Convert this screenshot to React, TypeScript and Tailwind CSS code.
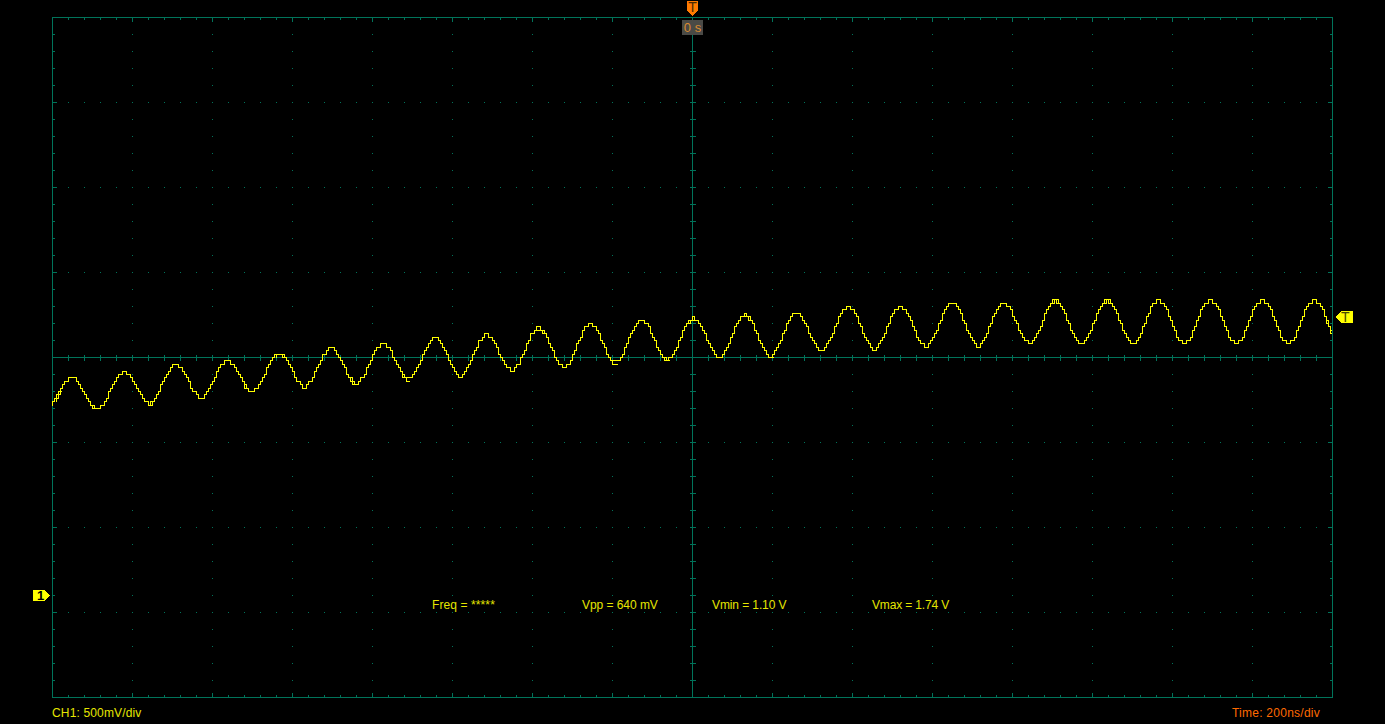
const LEFT = 52;
const TOP = 17;
const W = 1280;
const H = 680;
const GRID = '#00735a';

// peaks and troughs of the trace, read off the screen (page coordinates)
const extremes: [number, number][] = [
  [46, 409], [73, 377], [98, 408], [125, 371], [150, 403], [176, 364], [202, 397], [228, 360],
  [253, 391], [280, 352], [305, 386], [332, 347], [357, 383], [384, 343], [409, 379], [436, 337],
  [461, 376], [487, 334], [513, 370], [539, 327], [565, 367], [591, 323], [616, 362], [642, 319],
  [668, 359], [694, 317], [720, 357], [746, 314], [771, 356], [797, 312], [822, 350], [849, 306],
  [875, 349], [901, 306], [927, 346], [953, 302], [979, 346], [1004, 302], [1031, 343], [1056, 299],
  [1082, 343], [1108, 299], [1134, 343], [1159, 299], [1185, 343], [1211, 299], [1237, 343],
  [1263, 299], [1289, 343], [1315, 299], [1341, 343],
];

// stretches where overlapping acquisitions make the trace look heavier
const heavy: [number, number][] = [
  [56, 62], [88, 94], [148, 154], [198, 204], [244, 250], [276, 286], [350, 356], [402, 410],
  [456, 462], [534, 544], [612, 618], [664, 670], [688, 694], [744, 750], [768, 774], [1052, 1060],
  [1104, 1110], [1326, 1332],
];

function traceY(x: number) {
  let i = 0;
  while (i < extremes.length - 2 && extremes[i + 1][0] <= x) i++;
  const [x0, y0] = extremes[i];
  const [x1, y1] = extremes[i + 1];
  const t = (x - x0) / (x1 - x0);
  const c = Math.min(1, Math.max(0, (t - 0.04) / 0.92));
  const s = c - 0.07 * Math.sin(2 * Math.PI * c);
  return y0 + (y1 - y0) * s;
}

function stepPath(from: number, to: number, shift: number) {
  let d = '';
  let last = 0;
  for (let x = from; x <= to; x += 2) {
    const y = Math.round((traceY(x) + shift) / 3.4) * 3.4;
    const py = Math.round(y) + 0.5 - TOP;
    const px = x - LEFT;
    if (x === from) d = `M${px} ${py}`;
    else if (py !== last) d += `V${py}H${px}`;
    else d += `H${px}`;
    last = py;
  }
  return d;
}

function Graticule() {
  const ticks: string[] = [];
  const dots: React.ReactNode[] = [];
  const cx = 640.5;
  const cy = 340.5;

  for (let i = 1; i < 80; i++) {
    const x = i * 16 + 0.5;
    const len = i % 5 === 0 ? 4 : 2;
    ticks.push(`M${x} 0V${len + 0.5}M${x} ${H + 0.5}V${H - len}M${x} ${cy - 3}V${cy + 3.5}`);
  }
  for (let i = 1; i < 40; i++) {
    const y = i * 17 + 0.5;
    const len = i % 5 === 0 ? 4 : 2;
    ticks.push(`M0 ${y}H${len + 0.5}M${W + 0.5} ${y}H${W - len}M${cx - 3} ${y}H${cx + 3.5}`);
  }

  for (let c = 1; c < 16; c++) {
    if (c === 8) continue;
    for (let i = 1; i < 40; i++) {
      dots.push(<rect key={`c${c}-${i}`} x={c * 80} y={i * 17} width={1} height={1} />);
    }
  }
  for (let r = 1; r < 8; r++) {
    if (r === 4) continue;
    for (let i = 1; i < 80; i++) {
      dots.push(<rect key={`r${r}-${i}`} x={i * 16} y={r * 85} width={1} height={1} />);
    }
  }

  return (
    <svg width={W + 1} height={H + 1} viewBox={`0 0 ${W + 1} ${H + 1}`} shapeRendering="crispEdges" className="block overflow-visible">
      <g fill={GRID}>{dots}</g>
      <rect x={0.5} y={0.5} width={W} height={H} fill="none" stroke={GRID} />
      <path d={`M${cx} 0V${H}M0 ${cy}H${W}`} stroke={GRID} fill="none" />
      <path d={ticks.join('')} stroke={GRID} fill="none" />
      <path d={stepPath(LEFT, LEFT + W, 0)} stroke="#ffff00" fill="none" />
      {heavy.map(([a, b]) => (
        <path key={a} d={stepPath(a, b, 1.5)} stroke="#ffff00" fill="none" />
      ))}
    </svg>
  );
}

function TopMarker() {
  return (
    <div className="absolute left-[687px] top-[1px] h-[15px] w-[11px]">
      <svg width="11" height="15" viewBox="0 0 11 15" className="absolute inset-0" shapeRendering="crispEdges">
        <path d="M0 0H11V10L5.5 15L0 10Z" fill="#ff7a00" />
      </svg>
      <span className="absolute inset-x-0 top-[-1px] text-center text-[14px] leading-[14px] text-[#4a2800]">T</span>
    </div>
  );
}

function RightMarker() {
  return (
    <div className="absolute left-[1335px] top-[311px] h-[12px] w-[18px]">
      <svg width="18" height="12" viewBox="0 0 18 12" className="absolute inset-0" shapeRendering="crispEdges">
        <path d="M0 6L6 0H18V12H6Z" fill="#ffff00" />
      </svg>
      <span className="absolute left-[6px] top-[-1px] text-[14px] leading-[14px] text-[#4a4a00]">T</span>
    </div>
  );
}

function LeftMarker() {
  return (
    <div className="absolute left-[33px] top-[590px] h-[11px] w-[17px]">
      <svg width="17" height="11" viewBox="0 0 17 11" className="absolute inset-0" shapeRendering="crispEdges">
        <path d="M0 0H12L17 5.5L12 11H0Z" fill="#ffff00" />
      </svg>
      <span className="absolute left-[4px] top-[-1px] text-[13px] font-bold leading-[13px] text-black">1</span>
    </div>
  );
}

export default function App() {
  return (
    <div className="relative h-[724px] w-[1385px] overflow-hidden bg-black font-['Liberation_Sans',Arial,sans-serif] text-[12px] leading-[14px]">
      <div className="pl-[52px] pt-[17px]">
        <Graticule />
      </div>

      <div className="mt-[8px] flex justify-between pl-[52px] pr-[65px]">
        <span className="tracking-[0.15px] text-[#e6e600]">CH1: 500mV/div</span>
        <span className="tracking-[0.25px] text-[#ff6a00]">Time: 200ns/div</span>
      </div>

      <TopMarker />
      <div className="absolute left-[682px] top-[20px] flex h-[15px] w-[21px] items-center justify-center gap-[4px] bg-[#4a4a46] text-[13px] text-[#d98a30]">
        <span>0</span>
        <span>s</span>
      </div>
      <RightMarker />
      <LeftMarker />

      <div className="absolute left-[432px] top-[598px] flex text-[#e6e600]">
        <span className="w-[150px] tracking-[0.1px]">Freq = *****</span>
        <span className="w-[130px] tracking-[-0.05px]">Vpp = 640 mV</span>
        <span className="w-[160px] tracking-[-0.1px]">Vmin = 1.10 V</span>
        <span className="tracking-[-0.15px]">Vmax = 1.74 V</span>
      </div>
    </div>
  );
}
